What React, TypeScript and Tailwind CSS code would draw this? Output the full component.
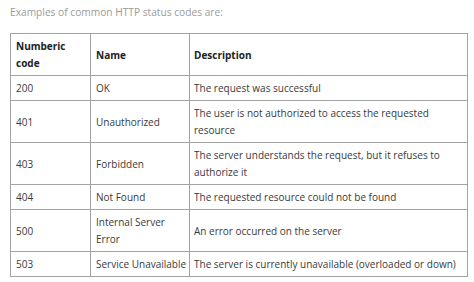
import React from 'react';

const rows = [
    { code: '200', name: ['OK'], desc: ['The request was successful'] },
    { code: '401', name: ['Unauthorized'], desc: ['The user is not authorized to access the requested', 'resource'] },
    { code: '403', name: ['Forbidden'], desc: ['The server understands the request, but it refuses to', 'authorize it'] },
    { code: '404', name: ['Not Found'], desc: ['The requested resource could not be found'] },
    { code: '500', name: ['Internal Server', 'Error'], desc: ['An error occurred on the server'] },
    { code: '503', name: ['Service Unavailable'], desc: ['The server is currently unavailable (overloaded or down)'] },
];

const Lines = ({ lines }: { lines: string[] }) => (
    <>
        {lines.map((l, i) => (
            <span key={i} className="block whitespace-nowrap">{l}</span>
        ))}
    </>
);

const App = () => {
    return (
        <div className="bg-white w-[474px] h-[282px] pl-[10px] pt-[4px] font-['Open_Sans',sans-serif]">
            <p className="text-[10.2px] leading-4 text-[#9a9a9a]">Examples of common HTTP status codes are:</p>
            <table className="mt-[13px] border-collapse w-[458px] table-fixed text-[10px] leading-[17px] text-[#3a3a3a]">
                <colgroup>
                    <col className="w-[80px]" />
                    <col className="w-[99px]" />
                    <col />
                </colgroup>
                <thead>
                    <tr>
                        <th className="border border-[#a3a3a3] px-[5px] pt-[4px] pb-[3px] text-left font-bold text-[#222]">Numberic<br />code</th>
                        <th className="border border-[#a3a3a3] px-[5px] pt-[4px] pb-[3px] text-left font-bold text-[#222]">Name</th>
                        <th className="border border-[#a3a3a3] px-[4px] pt-[4px] pb-[3px] text-left font-bold text-[#222]">Description</th>
                    </tr>
                </thead>
                <tbody>
                    {rows.map(r => (
                        <tr key={r.code}>
                            <td className="border border-[#a3a3a3] px-[5px] pt-[4px] pb-[3px]">{r.code}</td>
                            <td className="border border-[#a3a3a3] px-[5px] pt-[4px] pb-[3px]"><Lines lines={r.name} /></td>
                            <td className="border border-[#a3a3a3] px-[4px] pt-[4px] pb-[3px]"><Lines lines={r.desc} /></td>
                        </tr>
                    ))}
                </tbody>
            </table>
        </div>
    );
};

export default App;
